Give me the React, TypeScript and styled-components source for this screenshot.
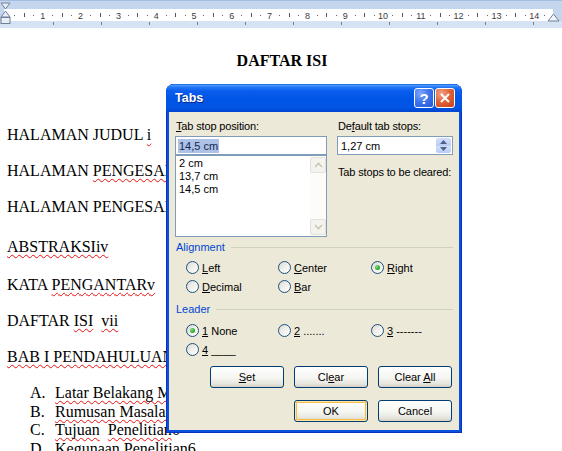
import styled, { createGlobalStyle } from "styled-components";

const GlobalStyle = createGlobalStyle`
  html, body {
    margin: 0;
    padding: 0;
    background: #fff;
  }
  body {
    width: 562px;
    height: 451px;
    overflow: hidden;
  }
`;

const Screen = styled.div`
  position: relative;
  width: 562px;
  height: 451px;
  overflow: hidden;
  background: #fff;
`;

/* ---------- ruler ---------- */

const RulerWrap = styled.div`
  height: 28px;
  svg {
    display: block;
  }
`;

const CM = 37.8;
const X0 = 5;

function Ruler() {
  const marks: JSX.Element[] = [];
  for (let n = 0; n <= 14; n++) {
    if (n >= 1) {
      marks.push(
        <text
          key={`n${n}`}
          x={X0 + n * CM}
          y={18.5}
          fontSize="9"
          fontFamily="Liberation Sans, Arial, sans-serif"
          fill="#3c3c3c"
          textAnchor="middle"
        >
          {n}
        </text>
      );
    }
    [0.25, 0.5, 0.75].forEach((f) => {
      if (n + f > 14.4) return;
      const x = Math.round(X0 + (n + f) * CM);
      marks.push(
        f === 0.5 ? (
          <rect key={`t${n}${f}`} x={x} y={13} width={1} height={4} fill="#555" />
        ) : (
          <rect key={`t${n}${f}`} x={x} y={15} width={1} height={1} fill="#666" />
        )
      );
    });
  }
  for (let k = 1; k <= 11; k++) {
    const x = Math.round(X0 + k * 48);
    marks.push(<rect key={`d${k}`} x={x} y={22} width={1} height={3} fill="#7a7a7a" />);
  }
  return (
    <RulerWrap>
      <svg width="562" height="28" viewBox="0 0 562 28">
        <rect x="0" y="0" width="562" height="28" fill="#c4d6ee" />
        <rect x="0" y="0" width="562" height="1" fill="#a3bde3" />
        <rect x="0" y="21" width="562" height="7" fill="#d6e3f4" />
        <rect x="4" y="9" width="549" height="12" fill="#fff" />
        {marks}
        {/* left indent hourglass */}
        <path d="M1 3 H10 L5.5 9 Z" fill="#e9eef6" stroke="#6f7f99" strokeWidth="1" />
        <path d="M5.5 11 L10 17 H1 Z" fill="#e9eef6" stroke="#6f7f99" strokeWidth="1" />
        <rect x="1" y="17.5" width="9" height="6" fill="#e9eef6" stroke="#6f7f99" strokeWidth="1" />
        {/* right indent */}
        <path d="M553.5 14 L559 21 H548 Z" fill="#f2f5fa" stroke="#6f7f99" strokeWidth="1" />
      </svg>
    </RulerWrap>
  );
}

/* ---------- document ---------- */

const Page = styled.div`
  padding: 24px 5px 0 7px;
  font-family: "Liberation Serif", "Times New Roman", serif;
  font-size: 16px;
  line-height: 18px;
  color: #000;
  white-space: pre;
`;

const Title = styled.div`
  font-weight: bold;
  text-align: center;
`;

const Entry = styled.div<{ $gap: number }>`
  margin-top: ${(p) => p.$gap}px;
`;

const Wavy = styled.span`
  text-decoration: underline wavy #e81010;
  text-decoration-thickness: 1px;
  text-underline-offset: 2px;
  text-decoration-skip-ink: none;
`;

const SubList = styled.div`
  margin-top: 18px;
  padding-left: 23px;
`;

const SubItem = styled.div`
  display: flex;
  line-height: 18.7px;
`;

const Marker = styled.span`
  width: 25px;
  flex: none;
`;

/* ---------- dialog ---------- */

const Window = styled.div`
  position: absolute;
  left: 166px;
  top: 84px;
  width: 296px;
  height: 349px;
  display: flex;
  flex-direction: column;
  background: #0b4fdf;
  border-radius: 8px 8px 0 0;
  box-shadow: inset 0 0 0 1px #0831c0;
  font-family: "Liberation Sans", Tahoma, Arial, sans-serif;
  font-size: 11px;
  color: #000;
  white-space: nowrap;
`;

const TitleBar = styled.div`
  height: 28px;
  flex: none;
  display: flex;
  align-items: center;
  gap: 1px;
  padding: 0 7px 0 9px;
  border-radius: 8px 8px 0 0;
  background: linear-gradient(
    180deg,
    #0a5ee8 0%,
    #4a97fa 5%,
    #2176f6 12%,
    #0a5ded 25%,
    #0055e6 55%,
    #0254e3 85%,
    #0044cf 100%
  );
`;

const TitleText = styled.div`
  flex: 1;
  color: #fff;
  font-weight: bold;
  font-size: 12.5px;
  text-shadow: 1px 1px 0 #0b2a8a;
`;

const CaptionButton = styled.div<{ $kind: "help" | "close" }>`
  width: 20px;
  height: 20px;
  box-sizing: border-box;
  border: 1px solid #fff;
  border-radius: 3px;
  display: flex;
  align-items: center;
  justify-content: center;
  color: #fff;
  font-weight: bold;
  font-size: 15px;
  background: ${(p) =>
    p.$kind === "help"
      ? "radial-gradient(circle at 30% 25%, #7fa8ff 0%, #3f76ee 45%, #2456d6 100%)"
      : "radial-gradient(circle at 30% 25%, #f3a489 0%, #e26237 45%, #c8401a 100%)"};
`;

const Body = styled.div`
  flex: 1;
  margin: 0 3px 3px;
  background: #ece9d8;
  padding: 8px 6px 0;
  display: flex;
  flex-direction: column;
`;

const TopGrid = styled.div`
  display: grid;
  grid-template-columns: 152px 116px;
  column-gap: 10px;
`;

const Column = styled.div`
  display: flex;
  flex-direction: column;
`;

const Label = styled.div<{ $gap?: number }>`
  line-height: 13px;
  padding-left: 1px;
  margin-top: ${(p) => p.$gap ?? 0}px;
  margin-bottom: 3px;
  letter-spacing: -0.15px;
`;

const TextField = styled.div`
  height: 19px;
  box-sizing: border-box;
  border: 1px solid #7f9db9;
  background: #fff;
  display: flex;
  align-items: center;
  padding-left: 2px;
`;

const Selected = styled.span`
  background: #adc2e7;
  color: #16284c;
  padding: 0 1px;
  line-height: 14px;
`;

const FieldText = styled.span`
  flex: 1;
  padding-left: 1px;
`;

const SpinBox = styled.div`
  width: 15px;
  height: 15px;
  margin-right: 1px;
  display: flex;
  flex-direction: column;
  border-radius: 2px;
  overflow: hidden;
`;

const SpinHalf = styled.div`
  flex: 1;
  display: flex;
  align-items: center;
  justify-content: center;
  background: linear-gradient(180deg, #d3e0fb, #b7cbf5);
`;

const ListBox = styled.div`
  height: 82px;
  box-sizing: border-box;
  border: 1px solid #7f9db9;
  background: #fff;
  display: flex;
`;

const ListItems = styled.div`
  flex: 1;
  padding: 1px 3px;
  line-height: 13px;
`;

const ScrollBar = styled.div`
  width: 16px;
  display: flex;
  flex-direction: column;
  justify-content: space-between;
  background: #fcfcfa;
  padding: 1px 0;
`;

const ScrollButton = styled.div`
  height: 16px;
  box-sizing: border-box;
  border: 1px solid #e4e2d8;
  border-radius: 2px;
  background: #f4f3ee;
  display: flex;
  align-items: center;
  justify-content: center;
`;

const GroupHeader = styled.div<{ $gap: number }>`
  display: flex;
  align-items: center;
  line-height: 13px;
  color: #0046d5;
  padding-left: 1px;
  margin-top: ${(p) => p.$gap}px;
  &::after {
    content: "";
    flex: 1;
    height: 1px;
    margin-left: 6px;
    background: #d0d0bf;
  }
`;

const RadioGrid = styled.div<{ $gap: number }>`
  display: grid;
  grid-template-columns: 92px 93px 1fr;
  grid-auto-rows: 19px;
  padding-left: 11px;
  margin-top: ${(p) => p.$gap}px;
`;

const RadioItem = styled.div`
  display: flex;
  align-items: center;
  gap: 3px;
  white-space: pre;
`;

const RadioCircle = styled.span<{ $checked?: boolean }>`
  width: 13px;
  height: 13px;
  box-sizing: border-box;
  border: 1px solid #1c5180;
  border-radius: 50%;
  display: flex;
  align-items: center;
  justify-content: center;
  background: linear-gradient(135deg, #d9d7ce 0%, #efeee9 45%, #fff 100%);
  &::after {
    content: "";
    display: ${(p) => (p.$checked ? "block" : "none")};
    width: 5px;
    height: 5px;
    border-radius: 50%;
    background: radial-gradient(circle at 35% 35%, #7fe07f, #21a121 70%);
  }
`;

const ButtonRow = styled.div<{ $gap: number }>`
  display: flex;
  justify-content: flex-end;
  gap: 10px;
  padding-right: 1px;
  margin-top: ${(p) => p.$gap}px;
`;

const Button = styled.div<{ $default?: boolean }>`
  width: 74px;
  height: 22px;
  box-sizing: border-box;
  border: 1px solid #003c74;
  border-radius: 3px;
  display: flex;
  align-items: center;
  justify-content: center;
  background: linear-gradient(180deg, #ffffff 0%, #f5f5f1 55%, #e6e4dc 85%, #d6d0c5 100%);
  box-shadow: ${(p) =>
    p.$default ? "inset 0 0 0 1px #fde8a6, inset 0 0 0 2px #f6bb4a" : "none"};
`;

function Radio({ label, checked }: { label: React.ReactNode; checked?: boolean }) {
  return (
    <RadioItem>
      <RadioCircle $checked={checked} />
      <span>{label}</span>
    </RadioItem>
  );
}

function Chevron({ up, color }: { up?: boolean; color: string }) {
  return (
    <svg width="9" height="6" viewBox="0 0 9 6">
      <path
        d={up ? "M1 5 L4.5 1.5 L8 5" : "M1 1 L4.5 4.5 L8 1"}
        fill="none"
        stroke={color}
        strokeWidth="1.6"
      />
    </svg>
  );
}

function TabsDialog() {
  return (
    <Window>
      <TitleBar>
        <TitleText>Tabs</TitleText>
        <CaptionButton $kind="help">?</CaptionButton>
        <CaptionButton $kind="close">
          <svg width="10" height="10" viewBox="0 0 10 10">
            <path d="M1 1 L9 9 M9 1 L1 9" stroke="#fff" strokeWidth="2" />
          </svg>
        </CaptionButton>
      </TitleBar>
      <Body>
        <TopGrid>
          <Column>
            <Label>
              <u>T</u>ab stop position:
            </Label>
            <TextField>
              <Selected>14,5 cm</Selected>
            </TextField>
            <ListBox>
              <ListItems>
                <div>2 cm</div>
                <div>13,7 cm</div>
                <div>14,5 cm</div>
              </ListItems>
              <ScrollBar>
                <ScrollButton>
                  <Chevron up color="#c9c7b8" />
                </ScrollButton>
                <ScrollButton>
                  <Chevron color="#c9c7b8" />
                </ScrollButton>
              </ScrollBar>
            </ListBox>
          </Column>
          <Column>
            <Label>
              De<u>f</u>ault tab stops:
            </Label>
            <TextField>
              <FieldText>1,27 cm</FieldText>
              <SpinBox>
                <SpinHalf>
                  <svg width="7" height="4" viewBox="0 0 7 4">
                    <path d="M0 4 L3.5 0 L7 4 Z" fill="#4d6185" />
                  </svg>
                </SpinHalf>
                <SpinHalf>
                  <svg width="7" height="4" viewBox="0 0 7 4">
                    <path d="M0 0 L3.5 4 L7 0 Z" fill="#4d6185" />
                  </svg>
                </SpinHalf>
              </SpinBox>
            </TextField>
            <Label $gap={11}>Tab stops to be cleared:</Label>
          </Column>
        </TopGrid>

        <GroupHeader $gap={4}>Alignment</GroupHeader>
        <RadioGrid $gap={4}>
          <Radio label={<><u>L</u>eft</>} />
          <Radio label={<><u>C</u>enter</>} />
          <Radio label={<><u>R</u>ight</>} checked />
          <Radio label={<><u>D</u>ecimal</>} />
          <Radio label={<><u>B</u>ar</>} />
        </RadioGrid>

        <GroupHeader $gap={7}>Leader</GroupHeader>
        <RadioGrid $gap={5}>
          <Radio label={<><u>1</u> None</>} checked />
          <Radio label={<><u>2</u> .......</>} />
          <Radio label={<><u>3</u> -------</>} />
          <Radio label={<><u>4</u> ____</>} />
        </RadioGrid>

        <ButtonRow $gap={7}>
          <Button>
            <span>
              <u>S</u>et
            </span>
          </Button>
          <Button>
            <span>
              Cl<u>e</u>ar
            </span>
          </Button>
          <Button>
            <span>
              Clear <u>A</u>ll
            </span>
          </Button>
        </ButtonRow>
        <ButtonRow $gap={12}>
          <Button $default>OK</Button>
          <Button>Cancel</Button>
        </ButtonRow>
      </Body>
    </Window>
  );
}

export default function App() {
  return (
    <Screen>
      <GlobalStyle />
      <Ruler />
      <Page>
        <Title>DAFTAR ISI</Title>
        <Entry $gap={56}>
          HALAMAN JUDUL <Wavy>i</Wavy>
        </Entry>
        <Entry $gap={18}>
          HALAMAN <Wavy>PENGESAHAN</Wavy> ii
        </Entry>
        <Entry $gap={18}>HALAMAN PENGESAHAN iii</Entry>
        <Entry $gap={22}>
          <Wavy>ABSTRAKSIiv</Wavy>
        </Entry>
        <Entry $gap={20}>
          KATA <Wavy>PENGANTARv</Wavy>
        </Entry>
        <Entry $gap={18}>
          DAFTAR <Wavy>ISI</Wavy>{"  "}<Wavy>vii</Wavy>
        </Entry>
        <Entry $gap={18}>
          <Wavy>BAB I PENDAHULUAN1</Wavy>
        </Entry>
        <SubList>
          <SubItem>
            <Marker>A.</Marker>
            <Wavy>Latar Belakang Masalah1</Wavy>
          </SubItem>
          <SubItem>
            <Marker>B.</Marker>
            <span>
              <Wavy>Rumusan Masalah</Wavy>5
            </span>
          </SubItem>
          <SubItem>
            <Marker>C.</Marker>
            <span>
              <Wavy>Tujuan</Wavy>{"  "}<Wavy>Penelitian</Wavy>6
            </span>
          </SubItem>
          <SubItem>
            <Marker>D.</Marker>
            <span>
              <Wavy>Kegunaan</Wavy> <Wavy>Penelitian6</Wavy>
            </span>
          </SubItem>
        </SubList>
      </Page>
      <TabsDialog />
    </Screen>
  );
}
